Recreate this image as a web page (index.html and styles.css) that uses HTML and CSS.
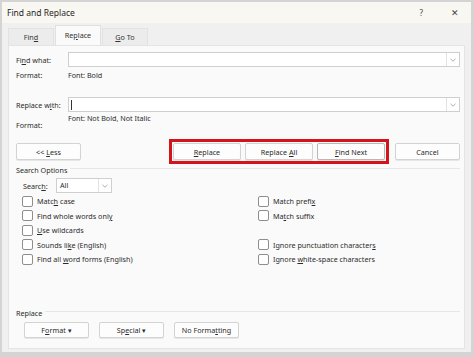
FILE: index.html
```html
<!DOCTYPE html>
<html>
  <head>
    <link rel="stylesheet" href="styles.css">
  </head>
  <body>
    <div class="frame">
      <div class="dialog">
        <div class="titlebar">
          <span class="title">Find and Replace</span>
          <span class="help">?</span>
          <span class="close">&#x2715;</span>
        </div>

        <div class="tabs">
          <div class="tab">Fin<u>d</u></div>
          <div class="tab active">Re<u>p</u>lace</div>
          <div class="tab"><u>G</u>o To</div>
        </div>

        <div class="panel">
          <div class="field-row">
            <label class="label">Fi<u>n</u>d what:</label>
            <div class="combo">
              <div class="combo-text"></div>
              <div class="combo-arrow">
                <svg width="6" height="4" viewBox="0 0 6 4"><path d="M0.5 0.8 L3 3.2 L5.5 0.8" fill="none" stroke="#9a9a9a" stroke-width="0.8"/></svg>
              </div>
            </div>
          </div>
          <div class="format-row">
            <span class="label">Format:</span>
            <span class="format-value">Font: Bold</span>
          </div>

          <div class="field-row second">
            <label class="label">Replace w<u>i</u>th:</label>
            <div class="combo">
              <div class="combo-text"><span class="caret"></span></div>
              <div class="combo-arrow">
                <svg width="6" height="4" viewBox="0 0 6 4"><path d="M0.5 0.8 L3 3.2 L5.5 0.8" fill="none" stroke="#9a9a9a" stroke-width="0.8"/></svg>
              </div>
            </div>
          </div>
          <div class="format-row offset">
            <span class="label low">Format:</span>
            <span class="format-value">Font: Not Bold, Not Italic</span>
          </div>

          <div class="button-row">
            <button class="btn less">&lt;&lt; <u>L</u>ess</button>
            <div class="highlight">
              <button class="btn wide"><u>R</u>eplace</button>
              <button class="btn wide">Replace <u>A</u>ll</button>
              <button class="btn wide focused"><u>F</u>ind Next</button>
            </div>
            <button class="btn cancel">Cancel</button>
          </div>

          <div class="group-title">
            <span>Search Options</span>
            <div class="rule"></div>
          </div>

          <div class="search-row">
            <span class="search-label">Searc<u>h</u>:</span>
            <div class="select">
              <span class="select-text">All</span>
              <span class="select-arrow">
                <svg width="6" height="4" viewBox="0 0 6 4"><path d="M0.5 0.8 L3 3.2 L5.5 0.8" fill="none" stroke="#9a9a9a" stroke-width="0.8"/></svg>
              </span>
            </div>
          </div>

          <div class="options">
            <div class="option"><span class="box"></span><span>Matc<u>h</u> case</span></div>
            <div class="option"><span class="box"></span><span>Match prefi<u>x</u></span></div>
            <div class="option"><span class="box"></span><span>Find whole words onl<u>y</u></span></div>
            <div class="option"><span class="box"></span><span>Ma<u>t</u>ch suffix</span></div>
            <div class="option"><span class="box"></span><span><u>U</u>se wildcards</span></div>
            <div class="option"></div>
            <div class="option"><span class="box"></span><span>Sounds li<u>k</u>e (English)</span></div>
            <div class="option"><span class="box"></span><span>Ignore punctuation character<u>s</u></span></div>
            <div class="option"><span class="box"></span><span>Find all <u>w</u>ord forms (English)</span></div>
            <div class="option"><span class="box"></span><span>Ignore <u>w</u>hite-space characters</span></div>
          </div>

          <div class="spacer"></div>

          <div class="group-title replace-title">
            <span>Replace</span>
            <div class="rule"></div>
          </div>

          <div class="bottom-row">
            <button class="btn small">F<u>o</u>rmat &#x25BE;</button>
            <button class="btn small">Sp<u>e</u>cial &#x25BE;</button>
            <button class="btn small">No Forma<u>t</u>ting</button>
          </div>
        </div>
      </div>
    </div>
  </body>
</html>
```

FILE: styles.css
```css
html,
body {
  margin: 0;
  padding: 0;
}

body {
  font-family: "Noto Sans", "Open Sans", sans-serif;
  font-size: 7.2px;
  color: #2b2b2b;
  background-color: #d4d4d4;
}

u {
  text-decoration-thickness: 1px;
  text-underline-offset: 1px;
}

.frame {
  width: 474px;
  height: 357px;
  box-sizing: border-box;
  padding: 2px 3px 5px 2px;
}

.dialog {
  height: 100%;
  background-color: #f0f0f0;
  display: flex;
  flex-direction: column;
}

.titlebar {
  height: 21px;
  background-color: #f9f7f1;
  display: flex;
  align-items: center;
  padding: 0 12px 0 5px;
}

.title {
  font-size: 8.5px;
  color: #1f1f1f;
  flex: 1;
}

.help {
  font-size: 8px;
  color: #444;
  margin-right: 28px;
}

.close {
  font-size: 9px;
  color: #444;
}

.tabs {
  display: flex;
  align-items: flex-end;
  height: 22px;
  padding-left: 6px;
}

.tab {
  width: 44px;
  height: 16px;
  line-height: 16px;
  text-align: center;
  background-color: #ececec;
  border: 1px solid #e2e2e2;
  border-bottom: none;
  margin-right: 1px;
  color: #333;
}

.tab.active {
  height: 19px;
  line-height: 18px;
  background-color: #fafafa;
  border-color: #e0e0e0;
}

.panel {
  flex: 1;
  margin: 0 6px 3px 6px;
  background-color: #fafafa;
  border: 1px solid #e4e4e4;
  padding: 6px 4px 0 7px;
  display: flex;
  flex-direction: column;
}

.field-row {
  display: flex;
  align-items: center;
  height: 15px;
}

.field-row.second {
  margin-top: 15px;
}

.label {
  width: 52px;
  flex-shrink: 0;
}

.combo {
  flex: 1;
  display: flex;
  height: 15px;
  box-sizing: border-box;
  border: 1px solid #cfcfcf;
  background-color: #fff;
}

.combo-text {
  flex: 1;
  display: flex;
  align-items: center;
  padding-left: 2px;
}

.caret {
  width: 1px;
  height: 10px;
  background-color: #333;
}

.combo-arrow,
.select-arrow {
  width: 12px;
  border-left: 1px solid #e2e2e2;
  display: flex;
  align-items: center;
  justify-content: center;
}

.format-row {
  display: flex;
  height: 14px;
  align-items: center;
  margin-top: 1px;
}

.format-row.offset {
  height: 20px;
  align-items: flex-start;
  margin-top: 1px;
}

.label.low {
  margin-top: 7px;
}

.button-row {
  display: flex;
  align-items: center;
  margin-top: 6px;
}

.btn {
  font-family: "Noto Sans", "Open Sans", sans-serif;
  font-size: 7.2px;
  color: #2b2b2b;
  height: 17px;
  width: 65px;
  padding: 0;
  background-color: #fdfdfd;
  border: 1px solid #d3d3d3;
  border-radius: 2px;
  box-shadow: 0 1px 0 #e6e6e6;
}

.btn.wide {
  width: 68px;
}

.btn.less {
  margin-right: auto;
}

.highlight {
  display: flex;
  gap: 4px;
  border: 3px solid #d4141b;
  padding: 1px 1px;
  margin-right: 6px;
}

.btn.focused {
  border-color: #b8b8b8;
}

.group-title {
  display: flex;
  align-items: center;
  margin-top: 0;
  height: 11px;
}

.group-title span {
  margin-right: 3px;
}

.rule {
  flex: 1;
  height: 1px;
  background-color: #e6e6e6;
  margin-top: -2px;
}

.search-row {
  display: flex;
  align-items: center;
  margin-top: 3px;
  padding-left: 7px;
  height: 15px;
}

.search-label {
  width: 33px;
}

.select {
  display: flex;
  width: 56px;
  height: 15px;
  box-sizing: border-box;
  border: 1px solid #cfcfcf;
  background-color: #fff;
}

.select-text {
  flex: 1;
  padding-left: 3px;
  line-height: 13px;
}

.options {
  display: grid;
  grid-template-columns: 236px 1fr;
  grid-auto-rows: 14.5px;
  margin-top: 1px;
  padding-left: 6px;
}

.option {
  display: flex;
  align-items: center;
}

.box {
  width: 9px;
  height: 9px;
  border: 1px solid #8e8e8e;
  border-radius: 2px;
  background-color: #fff;
  margin-right: 4px;
}

.spacer {
  flex: 1;
}

.replace-title {
  margin-top: 0;
}

.bottom-row {
  display: flex;
  gap: 10px;
  padding-left: 8px;
  margin-top: 4px;
  margin-bottom: 10px;
}

.btn.small {
  width: 65px;
  height: 16px;
}
```
